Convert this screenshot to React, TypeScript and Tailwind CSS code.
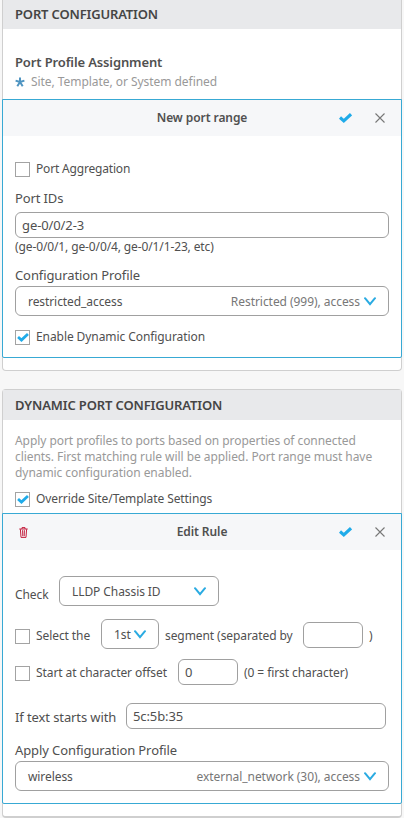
import type { ReactNode } from 'react';

function Check({ className }: { className: string }) {
  return (
    <svg viewBox="0 0 13 10" className={className} fill="none" stroke="#1fabe9" strokeWidth="3.1">
      <path d="M1 4.5 4.8 7.8 12 1.2" />
    </svg>
  );
}

function Chevron() {
  return (
    <svg viewBox="0 0 12 9" className="h-[9px] w-3 shrink-0" fill="none" stroke="#2aabe2" strokeWidth="2" strokeLinecap="round">
      <path d="m1 1.2 5 6 5-6" />
    </svg>
  );
}

function Close() {
  return (
    <svg viewBox="0 0 10 10" className="size-[10px]" fill="none" stroke="#777" strokeWidth="1.1">
      <path d="m.5.5 9 9m0-9-9 9" />
    </svg>
  );
}

function Trash() {
  return (
    <svg viewBox="0 0 9 11" className="h-[11px] w-[9px]" fill="none" stroke="#c41f3e" strokeWidth="1">
      <path d="M.3 2h8.4M3 2V.6h3V2M1.4 2.2l.6 8.2h5l.6-8.2M3.6 3.2l.2 6M5.4 3.2l-.2 6" />
    </svg>
  );
}

function Box({ checked = false, className = 'mt-px' }: { checked?: boolean; className?: string }) {
  return (
    <span className={`flex size-[15px] shrink-0 items-center justify-center border border-[#a3a3a3] bg-white ${className}`}>
      {checked && <Check className="h-[9px] w-3" />}
    </span>
  );
}

function Field({ className, children }: { className: string; children?: ReactNode }) {
  return (
    <div className={`flex h-[26px] shrink-0 items-center rounded-md border border-[#a0a0a0] bg-white px-1.5 text-[13px] tracking-[-0.1px] ${className}`}>
      {children}
    </div>
  );
}

function Select({ className, children }: { className: string; children: ReactNode }) {
  return (
    <div className={`flex h-[30px] shrink-0 items-center rounded-md border border-[#a0a0a0] bg-white px-3 ${className}`}>
      {children}
    </div>
  );
}

function PanelHead({ title, removable = false }: { title: string; removable?: boolean }) {
  return (
    <div className="grid h-9 grid-cols-[80px_1fr_80px] items-center bg-[#f6f7f9]">
      <div className="pl-4">{removable && <Trash />}</div>
      <div className="text-center text-[12px] font-semibold text-[#505050]">{title}</div>
      <div className="flex items-center gap-[23px] pl-[18px]">
        <Check className="h-[10px] w-[13px]" />
        <Close />
      </div>
    </div>
  );
}

export default function App() {
  return (
    <div className="h-[818px] w-[404px] overflow-hidden bg-[#f7f7f7] pl-[2px] font-['Noto_Sans','Open_Sans',sans-serif] text-[12px] leading-4 tracking-[-0.08px] whitespace-nowrap text-[#505050]">
      <section className="h-[371px] w-[400px] rounded-b border border-t-0 border-[#cfcfcf] bg-white">
        <h2 className="h-[29px] bg-[#e8e9eb] pt-[6px] pl-3 text-[13px] font-semibold tracking-[-0.16px] text-[#454545]">PORT CONFIGURATION</h2>
        <h3 className="mt-[25px] pl-3 text-[13px] font-semibold tracking-[-0.13px]">Port Profile Assignment</h3>
        <div className="mt-1 flex items-center pl-3 text-[#999]">
          <svg viewBox="0 0 10 10" className="mr-[6px] size-[10px]" stroke="#4e94c1" strokeWidth="2">
            <path d="M5 .4V5M.6 3.6 5 5M9.4 3.6 5 5M2.3 9.2 5 5M7.7 9.2 5 5" />
          </svg>
          <span className="tracking-[-0.05px]">Site, Template, or System defined</span>
        </div>
        <div className="-mx-px mt-[9px] h-[259px] rounded-b-xs border border-[#38a9d4]">
          <PanelHead title="New port range" />
          <div className="px-3">
            <div className="mt-[25px] flex h-4 items-center gap-1.5">
              <Box /><span className="tracking-[-0.18px]">Port Aggregation</span>
            </div>
            <div className="mt-[13px] text-[13px] tracking-[-0.13px]">Port IDs</div>
            <Field className="mt-[6px] w-[374px]">ge-0/0/2-3</Field>
            <div className="mt-px tracking-[-0.12px]">(ge-0/0/1, ge-0/0/4, ge-0/1/1-23, etc)</div>
            <div className="mt-[12px] text-[13px] tracking-[-0.1px]">Configuration Profile</div>
            <Select className="mt-[3px] w-[374px]">
              <span className="pt-0.5">restricted_access</span>
              <span className="mr-1 ml-auto pt-0.5 tracking-[-0.05px] text-[#777]">Restricted (999), access</span>
              <Chevron />
            </Select>
            <div className="mt-[13px] flex h-4 items-center gap-1.5">
              <Box checked />Enable Dynamic Configuration
            </div>
          </div>
        </div>
      </section>

      <section className="mt-[18px] h-[429px] w-[400px] rounded border border-b-2 border-[#cfcfcf] bg-white">
        <h2 className="h-[30px] bg-[#e8e9eb] pt-[7px] pl-3 text-[13px] font-semibold tracking-[-0.13px] text-[#454545]">DYNAMIC PORT CONFIGURATION</h2>
        <p className="mt-[13px] pl-3 text-[12px] tracking-[-0.06px] text-[#999]">
          Apply port profiles to ports based on properties of connected<br />
          clients. First matching rule will be applied. Port range must have<br />
          dynamic configuration enabled.
        </p>
        <div className="mt-[10px] flex h-4 items-center gap-1.5 pl-3">
          <Box checked />Override Site/Template Settings
        </div>
        <div className="-mx-px mt-[6px] h-[291px] rounded-b-xs border border-[#38a9d4]">
          <PanelHead title="Edit Rule" removable />
          <div className="px-3">
            <div className="mt-[26px] flex h-[30px] items-center">
              <span className="w-11 pt-2">Check</span>
              <Select className="w-[160px] justify-between"><span className="pt-0.5">LLDP Chassis ID</span><Chevron /></Select>
            </div>
            <div className="mt-[13px] flex h-[30px] items-center">
              <Box className="mt-[5px]" /><span className="w-[71px] pt-[3px] pl-1.5">Select the</span>
              <Select className="w-[58px] justify-between"><span className="pt-0.5">1st</span><Chevron /></Select>
              <span className="w-[144px] pt-[3px] pl-[6px]">segment (separated by</span>
              <Field className="mt-0.5 w-[60px]" />
              <span className="pt-[3px] pl-[6px]">)</span>
            </div>
            <div className="mt-[10px] flex h-[26px] items-center">
              <Box className="mt-[3px]" /><span className="w-[148px] pt-0.5 pl-1.5">Start at character offset</span>
              <Field className="w-[60px]">0</Field>
              <span className="pt-0.5 pl-[6px]">(0 = first character)</span>
            </div>
            <div className="mt-[18px] flex h-[26px] items-center">
              <span className="w-[111px] pt-0.5 text-[13px] tracking-[-0.1px]">If text starts with</span>
              <Field className="w-[260px]">5c:5b:35</Field>
            </div>
            <div className="mt-[13px] text-[13px] tracking-[-0.1px]">Apply Configuration Profile</div>
            <Select className="mt-[3px] w-[374px]">
              <span className="pt-0.5">wireless</span>
              <span className="mr-1 ml-auto pt-0.5 tracking-[-0.05px] text-[#777]">external_network (30), access</span>
              <Chevron />
            </Select>
          </div>
        </div>
      </section>
    </div>
  );
}
